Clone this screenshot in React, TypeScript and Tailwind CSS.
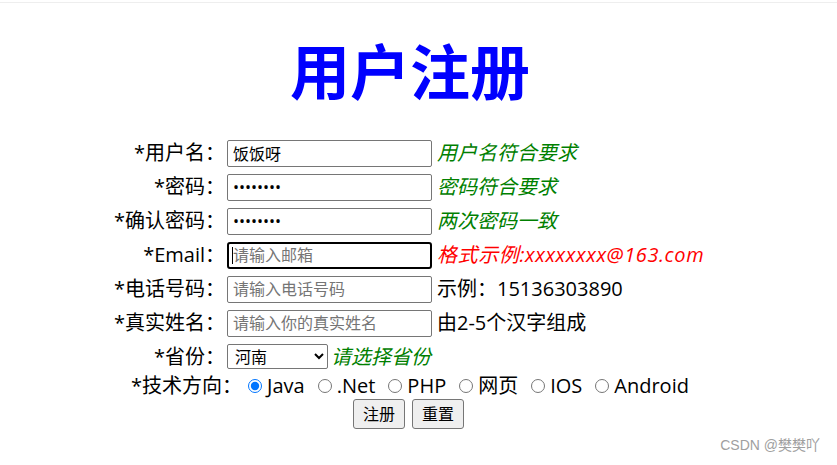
import React from 'react';

const font = {
  fontFamily: '"Open Sans", "Noto Sans CJK SC", sans-serif',
};

type Row = {
  label: string;
  type: string;
  value?: string;
  placeholder?: string;
  hint: string;
  hintClass: string;
  focused?: boolean;
};

const rows: Row[] = [
  { label: '*用户名：', type: 'text', value: '饭饭呀', hint: '用户名符合要求', hintClass: 'italic text-[#008000]' },
  { label: '*密码：', type: 'password', value: '12345678', hint: '密码符合要求', hintClass: 'italic text-[#008000]' },
  { label: '*确认密码：', type: 'password', value: '12345678', hint: '两次密码一致', hintClass: 'italic text-[#008000]' },
  { label: '*Email：', type: 'text', placeholder: '请输入邮箱', hint: '格式示例:xxxxxxxx@163.com', hintClass: 'italic tracking-[0.6px] text-[#ff0000]', focused: true },
  { label: '*电话号码：', type: 'text', placeholder: '请输入电话号码', hint: '示例：15136303890', hintClass: 'text-black' },
  { label: '*真实姓名：', type: 'text', placeholder: '请输入你的真实姓名', hint: '由2-5个汉字组成', hintClass: 'text-black' },
];

const techs = ['Java', '.Net', 'PHP', '网页', 'IOS', 'Android'];

export default function App() {
  return (
    <div className="relative h-[465px] w-[837px] overflow-hidden bg-white text-black" style={font}>
      <div className="mt-[2px] h-px bg-[#eeeeee]" />

      <div className="w-[820px]">
        {/* Title */}
        <h1 className="mt-[39px] h-[60px] text-center text-[60px] leading-[60px] font-bold text-[#0000ff]">
          用户注册
        </h1>

        {/* Form rows */}
        <div className="mt-[34px] ml-[113px] text-[20px]">
          {rows.map((r) => (
            <div key={r.label} className="flex h-[34px] items-center">
              <div className="w-[112px] text-right leading-none whitespace-nowrap">{r.label}</div>
              <div className="relative ml-[2px]">
                <input
                  type={r.type}
                  defaultValue={r.value}
                  placeholder={r.placeholder}
                  readOnly
                  className={
                    r.focused
                      ? 'block h-[27px] w-[205px] rounded-[3px] border-2 border-black bg-white px-[4px] text-[16px] leading-none outline-none placeholder:text-[#757575]'
                      : 'block h-[27px] w-[205px] rounded-[2px] border border-[#767676] bg-white px-[5px] text-[16px] leading-none outline-none placeholder:text-[#757575]'
                  }
                />
                {r.focused && (
                  <span className="absolute left-[5px] top-[5px] h-[17px] w-px bg-black" />
                )}
              </div>
              <div className={`ml-[5px] leading-none whitespace-nowrap ${r.hintClass}`}>{r.hint}</div>
            </div>
          ))}

          {/* Province */}
          <div className="flex h-[33px] items-center">
            <div className="w-[112px] text-right leading-none">*省份：</div>
            <select
              defaultValue="河南"
              className="ml-[2px] h-[25px] w-[101px] rounded-[2px] border border-[#767676] bg-white pl-[3px] text-[16px] leading-none"
            >
              <option>河南</option>
              <option>河北</option>
              <option>山东</option>
            </select>
            <div className="ml-[3px] italic leading-none text-[#008000]">请选择省份</div>
          </div>
        </div>

        {/* Tech direction */}
        <div className="flex h-[25px] items-center justify-center text-[20px] leading-none">
          <span className="mr-[6px]">*技术方向：</span>
          {techs.map((t, i) => (
            <label key={t} className={`flex items-center ${i > 0 ? 'ml-[13px]' : ''}`}>
              <input
                type="radio"
                name="tech"
                defaultChecked={i === 0}
                className="mr-[5px] h-[14px] w-[14px]"
              />
              <span>{t}</span>
            </label>
          ))}
        </div>

        {/* Buttons */}
        <div className="mt-[1px] flex justify-center gap-[7px] pr-[3px]">
          <button className="h-[30px] w-[52px] rounded-[3px] border border-[#767676] bg-[#efefef] text-[16px] leading-none">
            注册
          </button>
          <button className="h-[30px] w-[52px] rounded-[3px] border border-[#767676] bg-[#efefef] text-[16px] leading-none">
            重置
          </button>
        </div>
      </div>

      {/* Watermark */}
      <div
        className="absolute right-[17px] top-[438px] text-[14px] leading-none text-[#a0a0a0]"
        style={{ fontFamily: '"Liberation Sans", "Noto Sans CJK SC", sans-serif' }}
      >
        CSDN @樊樊吖
      </div>
    </div>
  );
}
